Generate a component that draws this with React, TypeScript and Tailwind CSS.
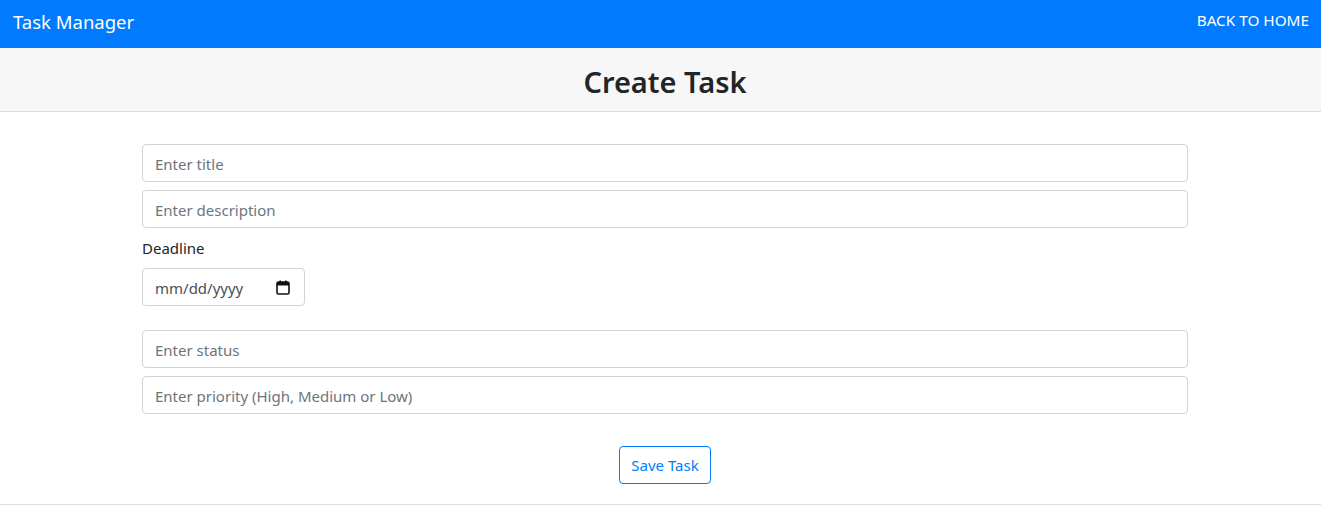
import React from 'react';

const font = { fontFamily: '"Noto Sans", "Open Sans", Arial, sans-serif' };

const inputCls =
  'block w-full h-[38px] px-3 pt-[2px] rounded-[4px] border border-[#ced4da] bg-white text-[15px] text-[#495057] placeholder:text-[#6c757d] outline-none';

export default function App() {
  return (
    <div className="min-h-[511px] bg-white text-[#212529]" style={font}>
      {/* ナビバー */}
      <nav className="h-12 bg-[#007bff] flex items-center justify-between pl-[13px] pr-[12px]">
        <span className="text-[18.5px] text-white leading-none -mt-[4px]">Task Manager</span>
        <a href="#" className="text-[15.3px] text-white leading-none -mt-[6px]">
          BACK TO HOME
        </a>
      </nav>

      {/* ヘッダー */}
      <div className="h-16 bg-[#f7f7f7] border-b border-[#dcdcdc] flex items-center justify-center pl-[142px] pr-[133px]">
        <h1 className="text-[29px] font-semibold leading-none pt-[4px]">Create Task</h1>
      </div>

      {/* フォーム */}
      <div className="border-b border-[#dcdcdc] pb-5">
        <form className="ml-[142px] mr-[133px] pt-8 flex flex-col">
          <input className={inputCls} placeholder="Enter title" />
          <input className={`${inputCls} mt-2`} placeholder="Enter description" />
          <label className="mt-[10px] text-[15px] leading-[20px]">Deadline</label>
          <div className="mt-[10px]">
            <div className="w-[163px] h-[38px] rounded-[4px] border border-[#ced4da] flex items-center justify-between pl-3 pr-[14px]">
              <span className="text-[15px] text-[#495057] pt-[2px]">mm/dd/yyyy</span>
              <svg width="14" height="15" viewBox="0 0 14 15" aria-hidden="true">
                <rect x="1" y="2" width="12" height="12" rx="1.5" fill="none" stroke="#111" strokeWidth="1.6" />
                <rect x="1" y="2" width="12" height="3.5" fill="#111" />
                <rect x="3.5" y="0.5" width="1.5" height="2.5" fill="#111" />
                <rect x="9" y="0.5" width="1.5" height="2.5" fill="#111" />
              </svg>
            </div>
          </div>
          <input className={`${inputCls} mt-6`} placeholder="Enter status" />
          <input className={`${inputCls} mt-2`} placeholder="Enter priority (High, Medium or Low)" />
          <div className="flex justify-center mt-8">
            <button
              type="button"
              className="h-[38px] w-[92px] rounded-[4px] border border-[#007bff] text-[#007bff] text-[15px] bg-white"
            >
              Save Task
            </button>
          </div>
        </form>
      </div>
    </div>
  );
}
